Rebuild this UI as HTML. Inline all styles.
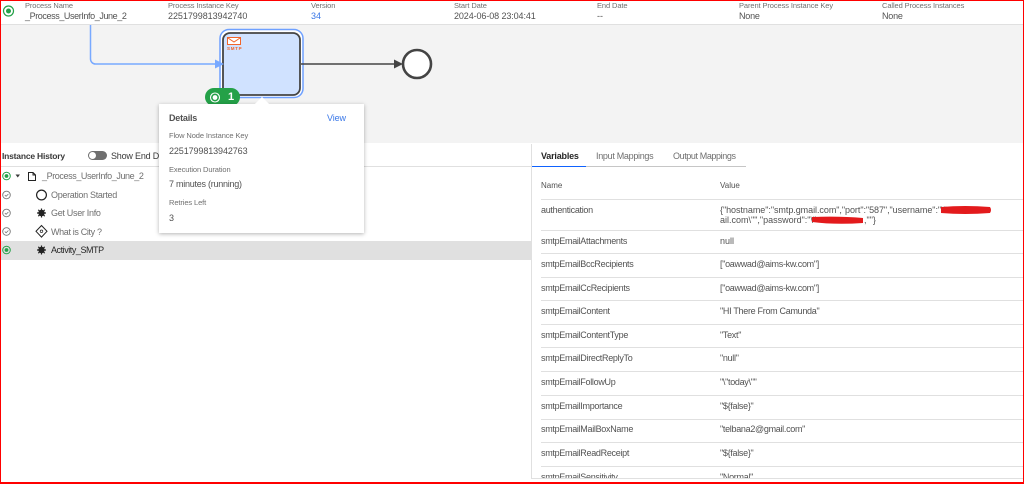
<!DOCTYPE html>
<html><head><meta charset="utf-8"><style>
html,body{margin:0;padding:0;background:#fff}
body{width:1024px;height:484px;position:relative;overflow:hidden;font-family:"Liberation Sans",sans-serif;color:#525252;font-size:9px}
#w{position:absolute;left:0;top:0;width:1024px;height:484px;overflow:hidden;background:#fff;filter:blur(.3px)}
.t{position:absolute;white-space:nowrap;line-height:12px}
.l{font-size:7.5px;color:#6f6f6f;letter-spacing:-.1px}
.v{font-size:9px;color:#525252}
.n{letter-spacing:-.3px}
.h{position:absolute;background:#e0e0e0;height:1px}
</style></head><body><div id="w">
<div style="position:absolute;left:0;top:24px;width:1024px;height:119px;background:#f3f3f3;border-top:1px solid #e0e0e0;box-sizing:border-box"></div>
<div class="t l" style="left:25px;top:0">Process Name</div><div class="t v" style="left:25px;top:10px;letter-spacing:-.4px">_Process_UserInfo_June_2</div>
<div class="t l" style="left:168px;top:0">Process Instance Key</div><div class="t v" style="left:168px;top:10px;letter-spacing:-.05px">2251799813942740</div>
<div class="t l" style="left:311px;top:0">Version</div><div class="t v" style="left:311px;top:10px;color:#3a78e8">34</div>
<div class="t l" style="left:454px;top:0">Start Date</div><div class="t v" style="left:454px;top:10px;letter-spacing:-.1px">2024-06-08 23:04:41</div>
<div class="t l" style="left:597px;top:0">End Date</div><div class="t v" style="left:597px;top:10px">--</div>
<div class="t l" style="left:739px;top:0">Parent Process Instance Key</div><div class="t v" style="left:739px;top:10px;letter-spacing:-.2px">None</div>
<div class="t l" style="left:882px;top:0">Called Process Instances</div><div class="t v" style="left:882px;top:10px;letter-spacing:-.2px">None</div>
<svg style="position:absolute;left:0;top:0" width="1024" height="484" fill="none">
<circle cx="8.500" cy="11" r="5" stroke="#24a148" stroke-width="1.200"/><circle cx="8.500" cy="11" r="2.500" fill="#24a148"/>
<path d="M90.500 25V59a5 5 0 0 0 5 5H216" stroke="#78a9ff" stroke-width="1.500"/>
<rect x="220" y="29.500" width="83" height="68" rx="9" stroke="#6ea0ff" stroke-width="1.500" fill="#fff"/>
<rect x="223" y="33" width="77" height="62" rx="7" fill="#d0e2ff" stroke="#444" stroke-width="1.800"/>
<path d="M215 59.500L224 64L215 68.500Z" fill="#78a9ff"/>
<rect x="227.500" y="37.500" width="13" height="7" fill="#fff" stroke="#f1652a"/>
<path d="M228 38l6 4 6-4" stroke="#f1652a"/>
<path d="M301 64H396" stroke="#444" stroke-width="1.600"/><path d="M394 59.500L403 64L394 68.500Z" fill="#444"/>
<circle cx="417" cy="64" r="14" fill="#fff" stroke="#444" stroke-width="2.600"/>
<rect x="205" y="88" width="35" height="18" rx="9" fill="#24a148"/>
<circle cx="215" cy="97.500" r="4.500" stroke="#fff" stroke-width="1.100"/><circle cx="215" cy="97.500" r="2.400" fill="#fff"/>
</svg>
<div class="t" style="left:227px;top:43px;font-size:4.500px;font-weight:bold;color:#f1652a;letter-spacing:.7px">SMTP</div>
<div class="t" style="left:228px;top:91px;font-size:11px;font-weight:bold;color:#fff;line-height:13px">1</div>

<div style="position:absolute;left:1px;top:143px;width:530px;height:340px;background:#fff"></div>
<div class="t" style="left:2px;top:150px;font-size:8.500px;font-weight:bold;color:#393939;letter-spacing:-.2px">Instance History</div>
<div style="position:absolute;left:88px;top:151px;width:19px;height:9px;border-radius:5px;background:#6f6f6f"></div>
<div style="position:absolute;left:89px;top:152px;width:7px;height:7px;border-radius:50%;background:#fff"></div>
<div class="t" style="left:111px;top:150px;font-size:9px;color:#393939;letter-spacing:-.2px">Show End Dates</div>
<div class="h" style="left:1px;top:166px;width:530px"></div>
<div style="position:absolute;left:1px;top:241px;width:530px;height:19px;background:#e0e0e0"></div>
<svg style="position:absolute;left:0;top:165px" width="70" height="100" fill="none">
<circle cx="6.500" cy="11" r="3.800" stroke="#24a148"/><circle cx="6.500" cy="11" r="1.900" fill="#24a148"/>
<path d="M15.500 9.500h4.500l-2.250 3z" fill="#393939"/>
<path d="M28.500 7.500h4.500l2.500 2.500v5.500h-7zM33 7.500v2.500h2.500" stroke="#222" stroke-width="1"/>
<circle cx="6.500" cy="30" r="3.800" stroke="#777" stroke-width=".9"/><path d="M4.800 30l1.300 1.300 2.300-2.300" stroke="#777" stroke-width=".8"/>
<circle cx="6.500" cy="48" r="3.800" stroke="#777" stroke-width=".9"/><path d="M4.800 48l1.300 1.300 2.300-2.300" stroke="#777" stroke-width=".8"/>
<circle cx="6.500" cy="66.500" r="3.800" stroke="#777" stroke-width=".9"/><path d="M4.800 66.500l1.300 1.300 2.300-2.300" stroke="#777" stroke-width=".8"/>
<circle cx="6.500" cy="85" r="3.800" stroke="#24a148"/><circle cx="6.500" cy="85" r="1.900" fill="#24a148"/>
<circle cx="41.500" cy="30" r="4.900" stroke="#222" stroke-width="1.200"/>
<g stroke="#222"><circle cx="41.500" cy="48" r="2.400" stroke-width="1.600"/><path d="M41.500 43.500v9M37 48h9M38.300 44.800l6.400 6.400M44.700 44.800l-6.400 6.400" stroke-width="1.200"/></g>
<path d="M41.500 60.500l5.500 5.800-5.500 5.800-5.500-5.800z" stroke="#222" stroke-width="1"/><circle cx="41.500" cy="66.300" r="1.300" stroke="#222" stroke-width=".7"/>
<g stroke="#222"><circle cx="41.500" cy="85" r="2.400" stroke-width="1.600"/><path d="M41.500 80.500v9M37 85h9M38.300 81.800l6.400 6.400M44.700 81.800l-6.400 6.400" stroke-width="1.200"/></g>
</svg>
<div class="t v" style="left:42px;top:170px;color:#6f6f6f;letter-spacing:-.4px">_Process_UserInfo_June_2</div>
<div class="t v n" style="left:51px;top:189px;color:#6f6f6f">Operation Started</div>
<div class="t v n" style="left:51px;top:207px;color:#6f6f6f">Get User Info</div>
<div class="t v" style="left:51px;top:226px;color:#6f6f6f;letter-spacing:-.35px">What is City ?</div>
<div class="t v" style="left:51px;top:244px;color:#262626;letter-spacing:-.45px">Activity_SMTP</div>

<div style="position:absolute;left:159px;top:104px;width:205px;height:129px;background:#fff;box-shadow:0 1px 4px rgba(0,0,0,.3)"></div>
<div style="position:absolute;left:257px;top:99px;width:10px;height:10px;background:#fff;transform:rotate(45deg)"></div>
<div class="t" style="left:169px;top:112px;font-size:9px;font-weight:bold;color:#525252;letter-spacing:-.2px">Details</div>
<div class="t" style="left:327px;top:112px;font-size:9px;color:#3a78e8;letter-spacing:-.1px">View</div>
<div class="t l" style="left:169px;top:130px">Flow Node Instance Key</div><div class="t v" style="left:169px;top:145px;letter-spacing:-.1px">2251799813942763</div>
<div class="t l" style="left:169px;top:164px">Execution Duration</div><div class="t v" style="left:169px;top:178px;letter-spacing:-.25px">7 minutes (running)</div>
<div class="t l" style="left:169px;top:197px">Retries Left</div><div class="t v" style="left:169px;top:212px">3</div>

<div style="position:absolute;left:531px;top:144px;width:492px;height:334px;background:#fff;border-left:1px solid #e0e0e0;box-sizing:border-box"></div>
<div class="t" style="left:541px;top:150px;font-size:9px;font-weight:bold;color:#262626;letter-spacing:-.2px">Variables</div>
<div class="t v n" style="left:596px;top:150px;color:#6f6f6f">Input Mappings</div>
<div class="t v" style="left:673px;top:150px;color:#6f6f6f;letter-spacing:-.4px">Output Mappings</div>
<div class="h" style="left:586px;top:166px;width:160px;background:#c6c6c6"></div>
<div style="position:absolute;left:532px;top:166px;width:54px;height:1px;background:#0f62fe"></div>
<div class="t" style="left:541px;top:180px;font-size:8px;color:#525252">Name</div>
<div class="t" style="left:720px;top:180px;font-size:8px;color:#525252">Value</div>
<div class="h" style="left:541px;top:199px;width:482px"></div>
<div class="t v n" style="left:541px;top:204px">authentication</div>
<div class="t v" style="left:720px;top:204px;letter-spacing:-.05px">{"hostname":"smtp.gmail.com","port":"587","username":"\"</div>
<div class="t v" style="left:720px;top:214px">ail.com\"","password":"\"</div>
<div class="t v" style="left:864px;top:214px">,""}</div>
<svg style="position:absolute;left:0;top:0" width="1024" height="484"><path d="M941 207Q965 205 990 207Q992 210 990 213Q965 215 941 213Z" fill="#e31a1c"/><path d="M812 217Q840 216 863 218L863 223Q835 225 812 222Z" fill="#e31a1c"/></svg>
<div class="h" style="left:541px;top:230px;width:482px"></div>
<div class="t v n" style="left:541px;top:235px">smtpEmailAttachments</div><div class="t v" style="left:720px;top:235px">null</div>
<div class="h" style="left:541px;top:253px;width:482px"></div>
<div class="t v n" style="left:541px;top:258px">smtpEmailBccRecipients</div><div class="t v n" style="left:720px;top:258px">["oawwad@aims-kw.com"]</div>
<div class="h" style="left:541px;top:277px;width:482px"></div>
<div class="t v n" style="left:541px;top:282px">smtpEmailCcRecipients</div><div class="t v n" style="left:720px;top:282px">["oawwad@aims-kw.com"]</div>
<div class="h" style="left:541px;top:300px;width:482px"></div>
<div class="t v n" style="left:541px;top:305px">smtpEmailContent</div><div class="t v n" style="left:720px;top:305px">"HI There From Camunda"</div>
<div class="h" style="left:541px;top:324px;width:482px"></div>
<div class="t v n" style="left:541px;top:329px">smtpEmailContentType</div><div class="t v n" style="left:720px;top:329px">"Text"</div>
<div class="h" style="left:541px;top:347px;width:482px"></div>
<div class="t v n" style="left:541px;top:352px">smtpEmailDirectReplyTo</div><div class="t v n" style="left:720px;top:352px">"null"</div>
<div class="h" style="left:541px;top:371px;width:482px"></div>
<div class="t v n" style="left:541px;top:376px">smtpEmailFollowUp</div><div class="t v n" style="left:720px;top:376px">"\"today\""</div>
<div class="h" style="left:541px;top:395px;width:482px"></div>
<div class="t v n" style="left:541px;top:400px">smtpEmailImportance</div><div class="t v n" style="left:720px;top:400px">"${false}"</div>
<div class="h" style="left:541px;top:419px;width:482px"></div>
<div class="t v n" style="left:541px;top:423px">smtpEmailMailBoxName</div><div class="t v n" style="left:720px;top:423px">"telbana2@gmail.com"</div>
<div class="h" style="left:541px;top:442px;width:482px"></div>
<div class="t v n" style="left:541px;top:447px">smtpEmailReadReceipt</div><div class="t v n" style="left:720px;top:447px">"${false}"</div>
<div class="h" style="left:541px;top:466px;width:482px"></div>
<div class="t v n" style="left:541px;top:471px">smtpEmailSensitivity</div><div class="t v n" style="left:720px;top:471px">"Normal"</div>
<div style="position:absolute;left:531px;top:478px;width:492px;height:5px;background:#fff;border-top:1px solid #e0e0e0;box-sizing:border-box"></div>
</div>
<div style="position:absolute;left:0;top:0;width:1024px;height:484px;box-sizing:border-box;border:1px solid #f00;border-width:1px 1px 2px 1px"></div>
</body></html>
